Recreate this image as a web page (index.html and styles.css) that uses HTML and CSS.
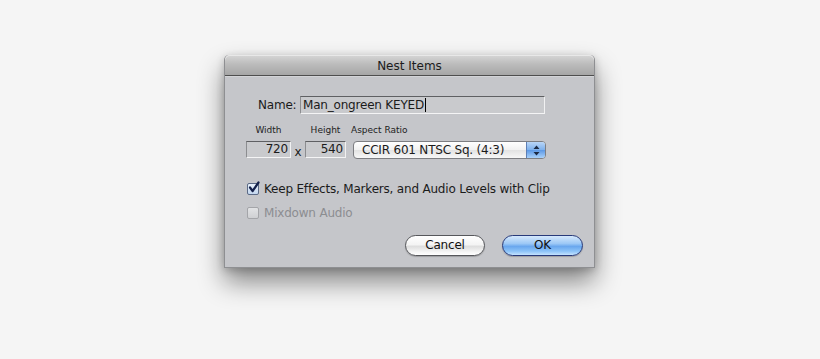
FILE: index.html
```html
<!DOCTYPE html>
<html>
<head>
<meta charset="utf-8">
<link rel="stylesheet" href="styles.css">
</head>
<body>
<div class="page">
  <div class="dialog">
    <div class="titlebar">Nest Items</div>
    <div class="content">
      <div class="name-row">
        <span class="name-label">Name:</span>
        <div class="field name-field">Man_ongreen KEYED<span class="caret"></span></div>
      </div>
      <div class="dims">
        <span class="dim-label">Width</span>
        <span></span>
        <span class="dim-label">Height</span>
        <span class="dim-label aspect-label">Aspect Ratio</span>
        <div class="field num">720</div>
        <span class="times">x</span>
        <div class="field num">540</div>
        <div class="popup">
          <span class="popup-text">CCIR 601 NTSC Sq. (4:3)</span>
          <span class="popup-arrows">
            <svg width="7" height="11" viewBox="0 0 7 11"><path d="M3.5 0.5 L6.5 4 L0.5 4 Z M3.5 10.5 L6.5 7 L0.5 7 Z" fill="#1c2a44"/></svg>
          </span>
        </div>
      </div>
      <div class="check-row">
        <span class="checkbox checked">
          <svg width="14" height="14" viewBox="0 0 14 14"><path d="M3 6.5 L5.6 10 L11.5 1.5" fill="none" stroke="#14204a" stroke-width="2.2" stroke-linecap="round" stroke-linejoin="round"/></svg>
        </span>
        <span>Keep Effects, Markers, and Audio Levels with Clip</span>
      </div>
      <div class="check-row disabled">
        <span class="checkbox"></span>
        <span>Mixdown Audio</span>
      </div>
      <div class="buttons">
        <button class="btn cancel">Cancel</button>
        <button class="btn ok">OK</button>
      </div>
    </div>
  </div>
</div>
</body>
</html>
```

FILE: styles.css
```css
html, body {
  margin: 0;
  padding: 0;
  background: #f5f5f5;
  font-family: "DejaVu Sans", "Liberation Sans", sans-serif;
  font-size: 12px;
  letter-spacing: -0.2px;
  color: #1b1b1b;
}

.page {
  width: 820px;
  height: 359px;
  padding-top: 55px;
  box-sizing: border-box;
  display: flex;
  justify-content: center;
  align-items: flex-start;
}

.dialog {
  width: 371px;
  margin-left: -1px;
  background: #c5c6ca;
  border: 1px solid #8e8f92;
  border-top: none;
  border-radius: 5px 5px 0 0;
  box-shadow: 0 14px 26px rgba(0, 0, 0, 0.45), 0 2px 8px rgba(0, 0, 0, 0.2);
  box-sizing: border-box;
}

.titlebar {
  height: 20px;
  border-bottom: 1px solid #4e4e4e;
  border-radius: 5px 5px 0 0;
  background: linear-gradient(#d6d6d6, #bcbcbc 45%, #a6a6a6);
  text-align: center;
  line-height: 23px;
  font-size: 12px;
  letter-spacing: 0;
  color: #1c1c1c;
  box-shadow: inset 0 1px 0 #e8e8e8;
}

.content {
  display: flex;
  flex-direction: column;
  padding-bottom: 11px;
  border-top: 1px solid #d3d4d7;
}

.name-row {
  display: flex;
  align-items: center;
  margin-top: 19px;
  padding-left: 33px;
  gap: 6px;
}

.name-label {
  width: 36px;
  text-align: right;
  white-space: nowrap;
}

.field {
  box-sizing: border-box;
  background: #c9cacd;
  border-top: 1px solid #5f6063;
  border-left: 1px solid #8c8d90;
  border-right: 1px solid #f1f1f2;
  border-bottom: 1px solid #f4f4f5;
  height: 18px;
  line-height: 16px;
}

.name-field {
  width: 245px;
  padding-left: 2px;
  display: flex;
  align-items: center;
  white-space: nowrap;
}

.caret {
  display: inline-block;
  width: 1px;
  height: 14px;
  background: #000;
  margin-left: 1px;
}

.dims {
  display: grid;
  grid-template-columns: 45px 14px 41px 200px;
  grid-template-rows: 13px 17px;
  row-gap: 4px;
  margin-top: 10px;
  padding-left: 21px;
  align-items: center;
}

.dim-label {
  font-size: 9px;
  letter-spacing: 0;
  line-height: 13px;
  text-align: center;
  color: #222;
  white-space: nowrap;
}

.aspect-label {
  text-align: left;
  padding-left: 5px;
}

.num {
  height: 17px;
  text-align: right;
  padding-right: 2px;
  line-height: 15px;
}

.times {
  text-align: center;
  padding-top: 4px;
}

.popup {
  justify-self: end;
  width: 193px;
  height: 18px;
  box-sizing: border-box;
  border: 1px solid #7d7e82;
  border-radius: 4px;
  background: linear-gradient(#ffffff, #f1f1f1 50%, #e3e3e3 52%, #f7f7f7);
  display: flex;
  align-items: center;
  overflow: hidden;
  margin-top: 1px;
}

.popup-text {
  flex: 1;
  padding-left: 8px;
  line-height: 16px;
  white-space: nowrap;
}

.popup-arrows {
  width: 18px;
  height: 100%;
  border-left: 1px solid #5d7fb5;
  background: linear-gradient(#b9d6f7, #7fb1ec 48%, #5d99e6 52%, #a9d1fa);
  display: flex;
  align-items: center;
  justify-content: center;
}

.check-row {
  display: flex;
  align-items: center;
  height: 16px;
  margin-top: 23px;
  padding-left: 22px;
  gap: 5px;
  white-space: nowrap;
}

.check-row + .check-row {
  margin-top: 8px;
}

.checkbox {
  width: 12px;
  height: 12px;
  box-sizing: border-box;
  border: 1px solid #7a7b80;
  border-radius: 2px;
  background: linear-gradient(#ffffff, #e4e4e6);
  position: relative;
  flex: none;
}

.checkbox.checked {
  background: linear-gradient(#e9f1fb, #c3d6ee);
  border-color: #5b6a86;
}

.checkbox svg {
  position: absolute;
  left: -1px;
  top: -3px;
}

.disabled {
  color: #8c8d91;
}

.disabled .checkbox {
  border-color: #a4a5a9;
  background: linear-gradient(#e2e3e5, #cfd0d3);
}

.buttons {
  display: flex;
  justify-content: flex-end;
  gap: 17px;
  margin-top: 14px;
  padding-right: 11px;
}

.btn {
  height: 21px;
  font-family: "DejaVu Sans", "Liberation Sans", sans-serif;
  font-size: 12px;
  letter-spacing: -0.2px;
  color: #111;
  border-radius: 11px;
  padding: 0;
  line-height: 19px;
}

.cancel {
  width: 80px;
  border: 1px solid #56575b;
  background: linear-gradient(#ffffff, #f4f4f4 45%, #dedede 55%, #f6f6f6 85%, #ffffff);
  box-shadow: 0 1px 1px rgba(0, 0, 0, 0.2);
}

.ok {
  width: 81px;
  border: 1px solid #283a7a;
  background: linear-gradient(#d5e8fc, #9cc8f6 40%, #6aa7ee 55%, #8cc3f8 80%, #c4e3ff);
  box-shadow: 0 1px 1px rgba(0, 0, 0, 0.2);
}
```
